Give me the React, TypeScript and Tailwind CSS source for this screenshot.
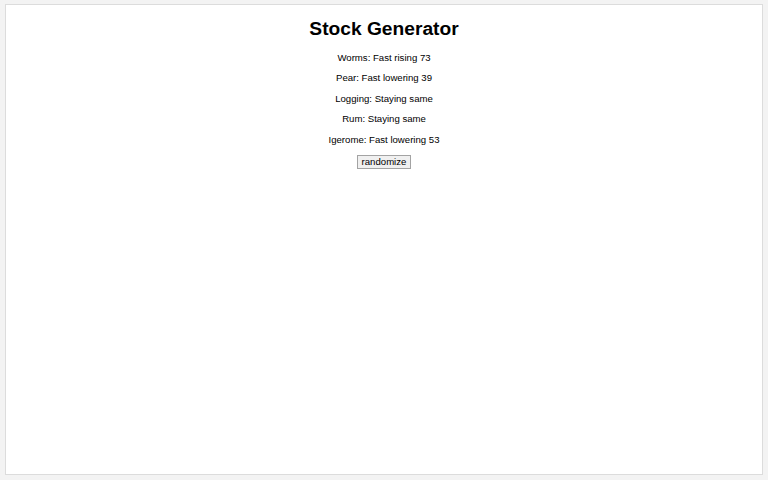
import { useState } from 'react';

const stocks = [
  { name: 'Worms', trend: 'Fast rising 73' },
  { name: 'Pear', trend: 'Fast lowering 39' },
  { name: 'Logging', trend: 'Staying same' },
  { name: 'Rum', trend: 'Staying same' },
  { name: 'Igerome', trend: 'Fast lowering 53' },
];

export default function App() {
  const [rows] = useState(stocks);

  return (
    <div className="h-[480px] w-[768px] bg-[#f3f3f3] p-[4px_5px_5px_5px]" style={{ fontFamily: '"Liberation Sans", Arial, sans-serif' }}>
      <div className="h-full w-full border border-[#dcdcdc] bg-white text-center text-black">
        <h1 className="mt-[12px] text-[19.2px] font-bold leading-[24px]">Stock Generator</h1>
        <div className="mt-[10.5px] flex flex-col items-center gap-[8.5px] text-[9.6px] leading-[12px]">
          {rows.map((s) => (
            <p key={s.name}>
              {s.name}: {s.trend}
            </p>
          ))}
        </div>
        <button className="mt-[9px] h-[14px] border border-[#a3a3a3] bg-[#f0f0f0] px-[4px] text-[9.6px] leading-[12px]">
          randomize
        </button>
      </div>
    </div>
  );
}
